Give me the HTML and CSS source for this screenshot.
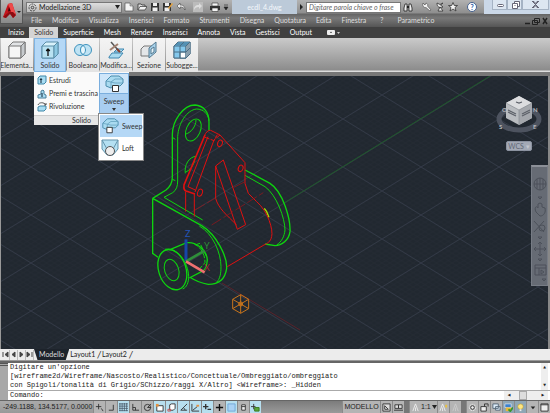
FILE: index.html
```html
<!DOCTYPE html>
<html lang="it">
<head>
    <meta charset="UTF-8">
    <title>Modellazione 3D</title>
    <meta name="viewport" content="width=device-width, initial-scale=1.0">
    <link rel="stylesheet" href="styles.css">
</head>
<body>
    <header class="header">
        <button class="app-button" aria-label="Menu applicazione">
            <svg width="22" height="23" viewBox="0 0 22 23">
                <path d="M2 17 L7 4 L11 3 L15 15 L12 18 L10 13 L6 14 L5 18 Z" fill="#c4141c"/>
                <path d="M7 4 L11 3 L15 15 L12 16 Z" fill="#ee4b4b"/>
                <path d="M2 17 L8 12 L12 12 L15 15 L12 18 L9 14 L5 18 Z" fill="#8e0c12"/>
                <path d="M8 7 L9.500 11 L7 11.500 Z" fill="#3c0507"/>
                <path d="M16 11 h4 l-2 2z" fill="#222"/>
            </svg>
        </button>
        <div class="titlebar">
            <div class="workspace">
                <svg width="9" height="9" viewBox="0 0 9 9" fill="none" stroke="#444"><circle cx="4.500" cy="4.500" r="3.500" stroke-dasharray="2 1"/><circle cx="4.500" cy="4.500" r="1.300"/></svg>
                <select class="workspace-select" aria-label="Area di lavoro"><option>Modellazione 3D</option></select>
                <svg width="5" height="4" viewBox="0 0 5 4"><path d="M0 0h5L2.500 4z" fill="#222"/></svg>
            </div>
            <div class="quick">
                <button aria-label="Nuovo"><svg viewBox="0 0 10 10"><path d="M1 1h5l3 3v5H1z" fill="#f4f4f4" stroke="#555" stroke-width=".7"/><path d="M6 1v3h3" fill="#bbb" stroke="#555" stroke-width=".5"/></svg></button>
                <button aria-label="Apri"><svg viewBox="0 0 10 10"><path d="M1 8V2h3l1 1h3v2" fill="#ddd" stroke="#333" stroke-width=".8"/><path d="M1 8l2-3.500h7L8 8z" fill="#f2f2f2" stroke="#333" stroke-width=".7"/></svg></button>
                <button aria-label="Salva"><svg viewBox="0 0 10 10"><path d="M1 1h8v8H1z" fill="#333"/><path d="M3 1h4v3H3zM2.500 5.500h5V9h-5z" fill="#eee"/></svg></button>
                <button aria-label="Salva con nome"><svg viewBox="0 0 10 10"><path d="M0 1h8v8H0z" fill="#333"/><path d="M2 1h4v3H2zM1.500 5.500h5V9h-5z" fill="#eee"/><path d="M5 6l4-5 1 1-4 5z" fill="#e8a33a"/></svg></button>
                <button aria-label="Annulla"><svg viewBox="0 0 10 10"><path d="M1 4l3-3v2c4 0 5 2 5 5-1-2-2-3-5-3v2z" fill="#eee" stroke="#444" stroke-width=".6"/></svg></button>
                <button class="off" aria-label="Ripeti"><svg viewBox="0 0 10 10"><path d="M9 4L6 1v2C2 3 1 5 1 8c1-2 2-3 5-3v2z" fill="#ddd"/></svg></button>
                <button aria-label="Stampa"><svg viewBox="0 0 10 10"><path d="M0 4h10v4H0z" fill="#333"/><path d="M2 1h6v3H2zM2 6h6v3.500H2z" fill="#f4f4f4" stroke="#333" stroke-width=".6"/></svg></button>
                <button class="more" aria-label="Personalizza"><svg viewBox="0 0 6 10"><path d="M1 3h4M1 5h4L3 8z" fill="#222" stroke="#222" stroke-width=".6"/></svg></button>
            </div>
            <div class="doc-title">ecdl_4.dwg</div>
            <svg class="expand" width="5" height="6" viewBox="0 0 5 6"><path d="M1 0l3 3-3 3z" fill="#222"/></svg>
            <input class="search" type="text" aria-label="Cerca" placeholder="Digitare parola chiave o frase">
            <div class="help-tools">
                <button aria-label="Cerca"><svg viewBox="0 0 10 10"><path d="M1 9V6l1-4h2v7zM6 9V2h2l1 4v3z" fill="#eee" stroke="#222" stroke-width=".8"/><path d="M4 4h2v2H4z" fill="#222"/></svg></button>
                <button aria-label="Assistenza"><svg viewBox="0 0 10 10"><path d="M1 1l2 2 1-2c2 1 2 2 1.500 3L9 8 8 9 4 5.500C2 6 0 4 1 1z" fill="#f4f4f4" stroke="#444" stroke-width=".6"/></svg></button>
                <button aria-label="Comunicazioni"><svg viewBox="0 0 10 10"><path d="M2 1c0 4 2 5 6 4L5.500 3 8 1 5 2.500zM3 9l2-4 3 4z" fill="#eee" stroke="#333" stroke-width=".8"/></svg></button>
                <button aria-label="Preferiti"><svg viewBox="0 0 10 10"><path d="M5 .500l1.300 3h3.200L7 5.500 8 9 5 7 2 9l1-3.500L.500 3.500h3.200z" fill="#f4f4f4" stroke="#333" stroke-width=".8"/></svg></button>
                <button class="help" aria-label="Guida">?</button>
            </div>
            <div class="window-tools">
                <button aria-label="Riduci"><svg viewBox="0 0 9 9"><rect x="1.500" y="4.500" width="6" height="2" rx="1" fill="#fff" stroke="#667"/></svg></button>
                <button aria-label="Ripristina"><svg viewBox="0 0 9 9" fill="#fff" stroke="#667"><path d="M3.500 1.500h5v5h-5z"/><path d="M1.500 3.500h5v5h-5z"/><path d="M3.500 5.500h1"/></svg></button>
                <button class="wide" aria-label="Chiudi"><svg viewBox="0 0 9 9" stroke="#667" fill="none"><path d="M1 1.500h2l1.500 2 1.500-2h2M1 7.500h2l1.500-2 1.500 2h2M2 2l5 5M7 2L2 7"/></svg></button>
            </div>
        </div>
        <nav class="menubar">
            <a href="#">File</a><a href="#">Modifica</a><a href="#">Visualizza</a><a href="#">Inserisci</a><a href="#">Formato</a><a href="#">Strumenti</a><a href="#">Disegna</a><a href="#">Quotatura</a><a href="#">Edita</a><a href="#">Finestra</a><a class="ask" href="#">?</a><a href="#">Parametrico</a>
            <svg class="doc-tools" width="24" height="8" viewBox="0 0 24 8" fill="none" stroke="#222"><path d="M1 6.500h5" stroke-width="1.500"/><path d="M10.500 1.500h5v4h-5zM8.500 3.500h5v4h-5z"/><path d="M19 1l4 6M23 1l-4 6" stroke-width="1.500"/></svg>
        </nav>
    </header>

    <nav class="tabs">
        <a href="#">Inizio</a><a class="active" href="#">Solido</a><a href="#">Superficie</a><a href="#">Mesh</a><a href="#">Render</a><a href="#">Inserisci</a><a href="#">Annota</a><a href="#">Vista</a><a href="#">Gestisci</a><a href="#">Output</a>
        <svg class="tab-icon" width="13" height="6" viewBox="0 0 13 6"><rect width="8" height="5" rx="1" fill="#eee"/><path d="M3 3h2L4 1.500z" fill="#333"/><path d="M10 2h3l-1.500 2z" fill="#ccc"/></svg>
    </nav>

    <div class="ribbon">
        <div class="tool">
            <button>
                <svg width="20" height="20" viewBox="0 0 20 20" stroke="#777" stroke-linejoin="round"><path d="M2 6l4-4h12v12l-4 4H2z" fill="#e2e4e6"/><path d="M2 6h12v12H2z" fill="#f6f6f6"/><path d="M14 6l4-4v12l-4 4z" fill="#c6cacd"/></svg>
                <span>Elementa...</span>
            </button>
        </div>
        <div class="tool">
            <button class="active">
                <svg width="20" height="20" viewBox="0 0 20 20" stroke="#5a8ea8" stroke-linejoin="round"><path d="M2 6l4-4h12v12l-4 4H2z" fill="#d8f1fa"/><path d="M2 6h12v12H2z" fill="#b9e2f2"/><path d="M14 6l4-4v12l-4 4z" fill="#8cc8e2"/><path d="M8 16V10M6.500 10.500L8 9l1.500 1.500z" stroke="#111" stroke-width="1.300"/></svg>
                <span>Solido</span>
            </button>
            <section class="panel">
                <div class="panel-body">
                    <div class="panel-list">
                        <button><svg width="10" height="10" viewBox="0 0 10 10"><path d="M1 3l2-2h6v6L7 9H1z" fill="#a8dcf2" stroke="#3f87a8"/><path d="M4 8V4M3 5l1-1.500L5 5" stroke="#123" fill="none"/></svg>Estrudi</button>
                        <button><svg width="10" height="10" viewBox="0 0 10 10"><path d="M1 9V6l3-1V2l2-1 1 1v3l2 1v3z" fill="#a8dcf2" stroke="#4b7f99"/><path d="M5 8V4" stroke="#123"/></svg>Premi e trascina</button>
                        <button><svg width="10" height="10" viewBox="0 0 10 10"><path d="M1 5l2-1h6v3L7 9H1z" fill="#a8dcf2" stroke="#3f87a8"/><path d="M1 3c1-3 6-3 8 0M9 1v2H7" stroke="#555" fill="none"/></svg>Rivoluzione</button>
                    </div>
                    <div class="split">
                        <button aria-label="Sweep">
                            <svg width="20" height="18" viewBox="0 0 20 18"><path d="M2 6l5-5h8l4 3v4l-3 3h-6l-3 2-5-2z" fill="#a9daf0" stroke="#4a8cac"/><path d="M2 6l5 1 4-3h8M7 13V7M7 7l4 1h8" fill="none" stroke="#5f9dbb" stroke-width=".8"/><path d="M8.500 10.500h6v6h-6z" fill="#fff" stroke="#333"/></svg>
                        </button>
                        <button class="split-label">Sweep<svg width="4" height="3" viewBox="0 0 4 3"><path d="M0 0h4L2 3z" fill="#333"/></svg></button>
                        <div class="flyout">
                            <button class="active"><svg width="18" height="18" viewBox="0 0 20 18"><path d="M2 6l5-5h8l4 3v4l-3 3h-6l-3 2-5-2z" fill="#a9daf0" stroke="#4a8cac"/><path d="M2 6l5 1 4-3h8M7 13V7M7 7l4 1h8" fill="none" stroke="#5f9dbb" stroke-width=".8"/><path d="M6.500 10.500h6v6h-6z" fill="#fff" stroke="#333"/></svg>Sweep</button>
                            <button><svg width="18" height="18" viewBox="0 0 18 18"><path d="M1 1h16v9l-5 6H6l-5-6z" fill="#b4e0f2" stroke="#6495ad"/><path d="M1 1l5 9M17 1l-5 9" stroke="#6495ad"/><circle cx="9" cy="12" r="4.500" fill="#eee" stroke="#555"/></svg>Loft</button>
                        </div>
                    </div>
                </div>
                <h2 class="panel-title">Solido</h2>
            </section>
        </div>
        <div class="tool">
            <button>
                <svg width="20" height="20" viewBox="0 0 20 20" stroke="#3f93bd"><circle cx="7" cy="10" r="5.500" fill="#bfe3f4"/><circle cx="13" cy="10" r="5.500" fill="#bfe3f4"/><path d="M10 5.400a5.500 5.500 0 0 1 0 9.200a5.500 5.500 0 0 1 0-9.200z" fill="#e8f6fc"/></svg>
                <span>Booleano</span>
            </button>
        </div>
        <div class="tool">
            <button>
                <svg width="20" height="20" viewBox="0 0 20 20"><path d="M8 12l3-3h7l-3 3zM3 17l3-4h11l-4 5H3z" fill="#a9daf0" stroke="#3f87b0"/><path d="M5 2l7 8" stroke="#555" stroke-width="1.500"/><path d="M4 10l8-6" stroke="#a08070" stroke-width="2"/><path d="M11 9l3 3" stroke="#8d3f2d" stroke-width="2"/></svg>
                <span>Modifica...</span>
            </button>
        </div>
        <div class="tool">
            <button>
                <svg width="20" height="20" viewBox="0 0 20 20" stroke="#777"><path d="M2 9l3-3h8v7l-3 3H2z" fill="#e4e6e8"/><path d="M10 8l7-6v10l-7 6z" fill="#a9d3ec" stroke="#52788f"/><path d="M12 9l3-2v5l-3 2z" fill="#e6f4fb" stroke="#52788f"/></svg>
                <span>Sezione</span>
            </button>
        </div>
        <div class="tool">
            <button>
                <svg width="20" height="20" viewBox="0 0 20 20" stroke="#4b6f86" stroke-linejoin="round"><path d="M2 6l4-4h12v12l-4 4H2z" fill="#5fb2e0"/><path d="M2 6h12v12H2z" fill="#84c8ec"/><path d="M8 12h6v6H8z" fill="#fff"/><path d="M14 6l4-4v12l-4 4z" fill="#c9d0d5"/><path d="M8 6v12M2 12h12l4-4M8 6l4-4M4 4h12v12" fill="none"/></svg>
                <span>Subogge...</span>
            </button>
        </div>
    </div>

    <main class="viewport">
        <svg class="drawing" width="100%" height="100%">
            <defs>
                <pattern id="minor" width="7.800" height="4.800" x="381" y="19" patternUnits="userSpaceOnUse">
                    <path d="M0 0L7.800 4.800M7.800 0L0 4.800" stroke="#262d37" stroke-width=".5"/>
                </pattern>
                <pattern id="major" width="78" height="48" x="381" y="19" patternUnits="userSpaceOnUse">
                    <path d="M0 0L78 48M78 0L0 48" stroke="#323946" stroke-width="1"/>
                </pattern>
            </defs>
            <rect width="100%" height="100%" fill="#212830"/>
            <rect width="100%" height="100%" fill="url(#minor)"/>
            <rect width="100%" height="100%" fill="url(#major)"/>
            <path d="M283 127L489 0" stroke="#1f5a2b"/>
            <path d="M221 207L299 254" stroke="#5a232b"/>

            <g transform="translate(139 14) scale(.3333)" fill="none" stroke-width="3">
                <g stroke="#0ed40e">
                    <!-- staffa posteriore -->
                    <path d="M38 325L78 300Q97 285 97 262V135C97 92 130 45 165 45C190 47 207 65 207 95V122" stroke-width="4"/>
                    <path d="M72 322L98 308Q114 298 113 270V140C115 100 140 60 170 57C190 57 205 72 207 92"/>
                    <ellipse cx="160" cy="120" rx="21" ry="35" transform="rotate(24 160 120)"/>
                    <path d="M138 132C152 128 168 110 168 90M136 250C132 225 148 200 168 199M138 246C150 240 160 228 164 212"/>
                    <path d="M97 142L106 148M97 268L106 272"/>
                    <!-- staffa anteriore -->
                    <path d="M38 325V490L54 502M38 325L185 407C230 435 262 500 260 535C255 570 235 583 205 583C185 580 165 572 150 562" stroke-width="4"/>
                    <path d="M72 322L188 390M178 408C220 432 243 490 243 530C243 552 240 566 230 577"/>
                    <!-- mozzo -->
                    <ellipse cx="97" cy="539" rx="41" ry="62" transform="rotate(-18 97 539)" stroke-width="4"/>
                    <path d="M75 478C110 470 145 515 146 560C146 578 140 592 128 597"/>
                    <ellipse cx="95" cy="540" rx="21" ry="33" transform="rotate(-18 95 540)"/>
                    <path d="M88 480L140 458C170 455 200 480 202 510C200 530 196 538 190 542L148 564" stroke-width="4"/>
                    <path d="M160 460C180 470 195 490 195 518L180 535M165 465L180 460L200 500" stroke-dasharray="16 5"/>
                    <!-- staffa destra -->
                    <path d="M315 240L390 280C430 305 452 390 450 425C447 450 425 467 405 467L375 462" stroke-width="4"/>
                    <path d="M315 256L375 290C410 315 435 385 435 420C433 440 425 455 410 465"/>
                    <path d="M373 355L380 365L387 382" stroke="#a5e000" stroke-width="4"/>
                </g>
                <g stroke="#e01010">
                    <path d="M192 140Q200 120 212 121L240 135L315 218V280L325 310L350 335C385 365 400 420 395 440C392 455 380 462 372 465L262 530"/>
                    <path d="M195 135L132 285Q130 300 138 303L165 312" stroke-width="5"/>
                    <path d="M222 150L165 306M204 140L144 290L166 300M137 305V365M163 312V380"/>
                    <path d="M195 142L222 152L232 134M240 135L222 150" stroke-dasharray="14 4"/>
                    <ellipse cx="240" cy="160" rx="7" ry="10" transform="rotate(20 240 160)"/>
                    <ellipse cx="302" cy="235" rx="7" ry="10" transform="rotate(20 302 235)"/>
                    <ellipse cx="180" cy="308" rx="7" ry="11" transform="rotate(20 180 308)"/>
                    <path d="M227 228L250 210L317 404L292 418L227 228V325C235 355 260 375 290 405"/>
                    <path d="M282 292L315 275M165 360L225 325M215 405L370 308" stroke="#a01418" stroke-width="2" stroke-dasharray="34 8"/>
                </g>
                <!-- icona UCS -->
                <path d="M138 514V448" stroke="#1746a8" stroke-width="9"/>
                <path d="M138 514L194 482" stroke="#2f8f3a" stroke-width="8"/>
                <path d="M138 514L194 547" stroke="#f07070" stroke-width="8"/>
                <!-- luce -->
                <g stroke="#c8741c">
                    <path d="M302 614L326 628V656L302 670L278 656V628ZM302 614V670M278 628L326 656M326 628L278 656"/>
                    <circle cx="302" cy="642" r="6"/>
                </g>
            </g>
            <text class="axis" x="184" y="161" fill="#2455b8">Z</text>
            <text class="axis" x="203" y="173" fill="#2f8f3a">Y</text>
            <text class="axis" x="203" y="195" fill="#a52a32">X</text>
        </svg>
        <div class="navigator">
            <svg width="50" height="44" viewBox="0 0 50 44">
                <ellipse cx="25" cy="27" rx="20" ry="11" fill="none" stroke="#4d535f" stroke-width="5"/>
                <path d="M25 4L38 11V26L25 33L12 26V11Z" fill="#b9bcc0"/>
                <path d="M25 4L38 11L25 18L12 11Z" fill="#dcdddf"/>
                <path d="M25 18L38 11V26L25 33Z" fill="#a4a7ac"/>
                <path d="M12 11L25 18L38 11M25 18V33" fill="none" stroke="#888c92" stroke-width=".7"/>
                <path d="M22 10l3 1 3-1M14 18l8 4M14 20l8 4M28 22l8-4M28 24l8-4" stroke="#5c6068" stroke-width="1.200" fill="none"/>
                <g class="compass"><text x="8" y="20">O</text><text x="39" y="20">N</text><text x="5" y="37">S</text><text x="39" y="37">E</text></g>
            </svg>
            <button class="wcs">WCS <span>▾</span></button>
        </div>
        <div class="navbar">
            <svg width="15" height="112" viewBox="0 0 15 112" fill="none" stroke="#4c515a">
                <circle cx="8" cy="14" r="6"/><path d="M2 14h12M8 8v12M5 9v10M11 9v10"/><path d="M6 27h4l-2 2z"/>
                <path d="M4 42c-2-4 0-7 2-4v-4l2-1 2 1v3l3 1c1 4-1 8-5 8z"/>
                <path d="M2 51l10 11M12 51L2 62"/><circle cx="10" cy="58" r="3"/><path d="M6 67h4l-2 2z"/>
                <path d="M8 72v14M2 79h12M6 74l2-2 2 2M6 84l2 2 2-2M4 77l-2 2 2 2M12 77l2 2-2 2"/><path d="M6 89h4l-2 2z"/>
                <path d="M3 95h11v10H3zM3 98h11M7 98v7M9 100l3 2-3 2z"/><path d="M10 109h4l-2 2z"/>
            </svg>
        </div>
    </main>

    <nav class="layouts">
        <button aria-label="Primo"><svg viewBox="0 0 7 7"><path d="M1 1v5M6 1v5L3 3.500z"/></svg></button>
        <button aria-label="Precedente"><svg viewBox="0 0 7 7"><path d="M5 1v5L2 3.500z"/></svg></button>
        <button aria-label="Successivo"><svg viewBox="0 0 7 7"><path d="M2 1v5l3-2.500z"/></svg></button>
        <button aria-label="Ultimo"><svg viewBox="0 0 7 7"><path d="M6 1v5M1 1v5l3-2.500z"/></svg></button>
        <a class="active" href="#">Modello</a><a href="#">Layout1</a><i>/</i><a href="#">Layout2</a><i>/</i>
    </nav>

    <section class="command">
        <div class="grip"></div>
        <div class="command-main">
            <div class="history">
                <pre>Digitare un'opzione
[wireframe2d/Wireframe/Nascosto/Realistico/Concettuale/Ombreggiato/ombreggiato
con Spigoli/tonalità di Grigio/SChizzo/raggi X/Altro] &lt;Wireframe&gt;: _Hidden</pre>
                <div class="scroll-y"><span>▴</span><span>▾</span></div>
            </div>
            <div class="prompt">
                <label for="comando">Comando:</label>
                <input id="comando" type="text">
                <div class="scroll-x"><span>◂</span><b></b><span>▸</span></div>
            </div>
        </div>
    </section>

    <footer class="status">
        <output class="coords">-249.1188, 134.5177, 0.0000</output>
        <div class="toggles">
            <button aria-label="Vincoli"><svg viewBox="0 0 10 10"><path d="M4 1v6M1 4h6M7 6l2 3"/></svg></button>
            <button aria-label="Snap"><svg viewBox="0 0 10 10"><path d="M7 2v6H2"/></svg></button>
            <button class="on" aria-label="Griglia"><svg viewBox="0 0 10 10"><path d="M0 1h10M0 3.500h10M0 6h10M0 8.500h10M1 0v9M3.500 0v9M6 0v9M8.500 0v9" stroke="#456" stroke-width=".8"/></svg></button>
            <button aria-label="Orto"><svg viewBox="0 0 10 10"><path d="M2 1v7h7M2 5h3v3"/></svg></button>
            <button aria-label="Polare"><svg viewBox="0 0 10 10"><circle cx="5" cy="5" r="3.500"/><path d="M5 5l4-4M5 5h4"/></svg></button>
            <button class="on" aria-label="Osnap"><svg viewBox="0 0 10 10"><path d="M2 3h7v6H2z" fill="#fff"/><path d="M1 1h3v3H1z" fill="#e59140" stroke="none"/></svg></button>
            <button class="on" aria-label="Osnap 3D"><svg viewBox="0 0 10 10"><path d="M3 2l2-1h4v5L7 8H3z" fill="#fff"/><path d="M1 7h3v2H1z" stroke="#c55"/></svg></button>
            <button class="on" aria-label="Puntamento"><svg viewBox="0 0 10 10"><path d="M9 1L2 8h7M5 5l2 3"/></svg></button>
            <button class="on" aria-label="UCS dinamico"><svg viewBox="0 0 10 10"><path d="M1 1v8h8M2 8l5-4"/><path d="M6 2h3v2H6z" fill="#e59140" stroke="none"/></svg></button>
            <button class="on" aria-label="Input dinamico"><svg viewBox="0 0 10 10"><path d="M3 1v6M0 4h6M5 7h4" stroke-width="1.500"/></svg></button>
            <button aria-label="Spessore"><svg viewBox="0 0 10 10"><path d="M5 1v8M1 5h8" stroke="#111" stroke-width="1.500"/></svg></button>
            <button class="on" aria-label="Trasparenza"><svg viewBox="0 0 10 10"><path d="M1 1h8v8H1z" fill="#a9d1f4" stroke="#6fa6d6"/></svg></button>
            <button aria-label="Proprietà"><svg viewBox="0 0 10 10"><path d="M3 2h4v6H3zM3 4h4" fill="#eee"/></svg></button>
            <button class="on" aria-label="Selezione ciclica"><svg viewBox="0 0 10 10"><path d="M3 1v6M0 4h5"/><path d="M4 5h5v4H4z" fill="#5aa63c" stroke="#38761d"/></svg></button>
        </div>
        <div class="view-tools">
            <button class="model">MODELLO</button>
            <button aria-label="Layout"><svg viewBox="0 0 10 10"><path d="M1 1h8v8H1z" fill="#ddd"/><path d="M3 3l4 4H3z"/></svg></button>
            <button aria-label="Viste"><svg viewBox="0 0 10 10"><path d="M1 2h4v4H1zM5 2h4v4H5zM0 8h10" fill="#ddd"/></svg></button>
            <span class="gap"></span>
            <button class="scale"><svg viewBox="0 0 10 10"><path d="M5 1L2 9M5 1l3 8M5 5v4" stroke="#eee"/></svg>1:1<svg class="arrow" viewBox="0 0 5 4"><path d="M0 0h5L2.500 4z" fill="#222" stroke="none"/></svg></button>
            <button aria-label="Visibilità"><svg viewBox="0 0 10 10"><path d="M4 1L1 9M4 1l3 8M4 5v4" stroke="#eee"/><path d="M7 2h2v3H7z" fill="#ecc23c" stroke="none"/></svg></button>
            <button aria-label="Automatico"><svg viewBox="0 0 10 10"><path d="M5 1L2 9M5 1l3 8M5 5v4" stroke="#ccc"/></svg></button>
            <span class="gap"></span>
            <button aria-label="Spazio"><svg viewBox="0 0 10 10"><circle cx="5" cy="5" r="3.500" stroke="#eee" stroke-dasharray="2 1"/><circle cx="5" cy="5" r="2" fill="#eee"/></svg></button>
            <button aria-label="Blocca"><svg viewBox="0 0 10 10"><path d="M1 4h6v5H1z" fill="#eee"/><path d="M5 4V1h4v3"/></svg></button>
            <button aria-label="Hardware"><svg viewBox="0 0 10 10"><path d="M1 1h6v5H1zM4 4h5v4H4z" fill="#dcebf7" stroke="#567"/></svg></button>
            <button class="tray" aria-label="Libreria"><svg viewBox="0 0 10 10"><path d="M1 1h7v4H1z" fill="#3c82cf" stroke="#fff" stroke-width=".6"/><path d="M2 5h6v4H2z" fill="#e8b83a" stroke="none"/><path d="M5 7l2 2 3-4" stroke="#39952b" stroke-width="2"/></svg></button>
            <button class="tray" aria-label="Isola"><svg viewBox="0 0 10 10"><circle cx="5" cy="4" r="3" fill="#ffe680" stroke="#b99b2a" stroke-width=".6"/><path d="M4 7h2v2H4z" fill="#eee" stroke="none"/></svg></button>
            <button aria-label="Menu barra"><svg viewBox="0 0 10 10"><path d="M3 4h5L5.500 7z" fill="#222" stroke="none"/></svg></button>
            <button aria-label="Schermo intero"><svg viewBox="0 0 10 10"><path d="M1 1h8v8H1zM1 2h8" fill="#eee"/></svg></button>
        </div>
    </footer>
</body>
</html>
```
FILE: styles.css
```css
* {
    box-sizing: border-box;
}
body {
    margin: 0;
    min-height: 100vh;
    display: flex;
    flex-direction: column;
    overflow: hidden;
    background: #777;
    font-family: Lato, "Liberation Sans", sans-serif;
    font-size: 7px;
    line-height: 9px;
    color: #333;
}
button, input, select {
    margin: 0;
    padding: 0;
    border: 0;
    background: none;
    font: inherit;
    color: inherit;
}
a {
    color: inherit;
    text-decoration: none;
}
svg {
    display: block;
    flex: none;
}

/* titolo e menu */
.header {
    display: grid;
    grid-template-columns: 23px 1fr;
    grid-template-rows: 14px 13px;
    background: linear-gradient(#b2b2b2, #8e8e8e 13px, #646464 14px, #787878 18px, #555);
}
.app-button {
    grid-row: 1 / 3;
    height: 24px;
    border: 1px solid #555;
    border-top: 0;
    background: linear-gradient(#b9b9b9, #8a8a8a);
    overflow: hidden;
}
.titlebar {
    display: flex;
    align-items: center;
    min-width: 0;
}
.workspace {
    display: flex;
    align-items: center;
    gap: 2px;
    flex: none;
    width: 96px;
    height: 11px;
    margin-left: 3px;
    padding: 0 1px;
    border: 1px solid #777;
    background: linear-gradient(#dedede, #bcbcbc);
}
.workspace-select {
    flex: 1;
    appearance: none;
    height: 9px;
    color: #222;
}
.quick {
    display: flex;
    align-items: center;
    gap: 3px;
    width: 110px;
    padding-left: 2px;
}
.quick svg, .help-tools svg {
    width: 10px;
    height: 10px;
}
.quick .off {
    margin: 0 4px;
    background: #bbb;
}
.quick .more svg {
    width: 6px;
}
.doc-title {
    flex: none;
    width: 65px;
    height: 14px;
    line-height: 14px;
    text-align: center;
    color: #f4f8fc;
    background: #bccad9;
}
.expand {
    margin: 0 2px;
}
.search {
    flex: 1;
    min-width: 0;
    height: 11px;
    padding: 0 2px;
    border: 1px solid #777;
    background: #fff;
}
.search::placeholder {
    color: #666;
    font-style: italic;
}
.help-tools {
    display: flex;
    gap: 3px;
    padding: 0 7px 0 2px;
}
.help-tools button:first-child {
    margin-right: 6px;
}
.help-tools .help {
    width: 10px;
    height: 10px;
    margin-left: 6px;
    border: 1px solid #46628f;
    border-radius: 5px;
    background: #fff;
    color: #2453a0;
    font-weight: bold;
    line-height: 8px;
}
.window-tools {
    display: flex;
    align-items: flex-start;
    height: 14px;
    padding: 0 1px 0 8px;
    background: #cbd8e8;
}
.window-tools button {
    width: 15px;
    height: 10px;
    padding-left: 3px;
    border: 1px solid #a5b3c4;
    border-top: 0;
    background: #dce6f1;
}
.window-tools .wide {
    width: 27px;
    padding-left: 8px;
}
.window-tools svg {
    width: 9px;
    height: 9px;
}
.menubar {
    display: flex;
    align-items: center;
    gap: 10px;
    padding: 0 2px 0 8px;
    color: #dedede;
}
.menubar .ask {
    padding: 0 4px;
}
.doc-tools {
    margin-left: auto;
}

/* schede */
.tabs {
    display: flex;
    align-items: stretch;
    height: 11px;
    padding-left: 3px;
    background: #404040;
    color: #fff;
    line-height: 11px;
}
.tabs a {
    padding: 0 5px;
}
.tabs .active {
    background: #d4d4d4;
    color: #333;
}
.tab-icon {
    align-self: center;
    margin-left: 10px;
}

/* barra multifunzione */
.ribbon {
    display: flex;
    gap: 1px;
    padding: 0 1px;
    border-bottom: 4px solid #777;
    background: linear-gradient(#cacaca, #8c8c8c 32px, #ddd 33px);
}
.tool {
    position: relative;
    width: 32px;
}
.tool > button {
    display: flex;
    flex-direction: column;
    align-items: center;
    width: 100%;
    height: 34px;
    padding-top: 2px;
    background: linear-gradient(#f4f4f4, #e4e4e4);
    white-space: nowrap;
    overflow: hidden;
}
.tool > button span {
    margin-top: 1px;
}
.tool > .active {
    border: 1px solid #7fb4e3;
    padding-top: 1px;
    background: #b5d8f6;
}
.panel {
    position: absolute;
    z-index: 2;
    top: 34px;
    left: 0;
    width: 95px;
    background: #fafafa;
}
.panel-body {
    display: flex;
    height: 43px;
}
.panel-list {
    flex: 1;
    display: flex;
    flex-direction: column;
    justify-content: space-evenly;
    padding-left: 3px;
}
.panel-list button {
    display: flex;
    align-items: center;
    gap: 2px;
    white-space: nowrap;
}
.split {
    position: relative;
    flex: none;
    width: 32px;
    padding: 1px;
}
.split button {
    display: flex;
    align-items: center;
    justify-content: center;
    width: 100%;
    height: 21px;
    border: 1px solid #7aaede;
    background: #cfe6fa;
}
.split .split-label {
    flex-direction: column;
    gap: 2px;
    height: 20px;
    border-top: 0;
    background: #a8cdf0;
}
.panel-title {
    margin: 0;
    height: 10px;
    border-top: 1px solid #ccc;
    background: #e6e6e6;
    font-size: 7px;
    font-weight: normal;
    line-height: 9px;
    text-align: center;
}
.flyout {
    position: absolute;
    top: 41px;
    left: 0;
    width: 46px;
    padding: 1px;
    border: 1px solid #888;
    background: #fff;
}
.flyout button {
    justify-content: flex-start;
    gap: 3px;
    height: 22px;
    padding-left: 1px;
    border: 0;
    background: #fff;
}
.flyout .active {
    background: #b5d8f6;
}

/* area di disegno */
.viewport {
    position: relative;
    flex: 1;
    min-height: 120px;
    border-left: 1px solid #999;
    border-right: 2px solid #888;
}
.drawing {
    position: absolute;
    inset: 0;
}
.axis {
    font-size: 9px;
}
.navigator {
    position: absolute;
    top: 16px;
    right: 4px;
    display: flex;
    flex-direction: column;
    align-items: center;
    gap: 5px;
}
.compass {
    fill: #b5b8bd;
    font-size: 6px;
    font-weight: bold;
}
.wcs {
    width: 26px;
    height: 10px;
    border: 1px solid #8b92a0;
    border-radius: 2px;
    background: #a3a9b5;
    color: #626875;
    line-height: 8px;
}
.wcs span {
    color: #c2c6ce;
}
.navbar {
    position: absolute;
    top: 89px;
    right: 0;
    width: 17px;
    height: 121px;
    padding-top: 3px;
    border: 1px solid #777c85;
    border-top: 2px solid #8c9098;
    background: #666b74;
}

/* schede layout */
.layouts {
    display: flex;
    align-items: center;
    height: 12px;
    padding-left: 2px;
    border-bottom: 1px solid #999;
    background: #ececec;
    color: #222;
}
.layouts button {
    width: 8px;
    height: 10px;
    border-right: 1px solid #bbb;
}
.layouts button svg {
    width: 7px;
    height: 7px;
    fill: #444;
    stroke: #444;
    stroke-width: 1px;
}
.layouts a {
    padding: 0 2px 0 1px;
}
.layouts .active {
    align-self: stretch;
    padding: 0 5px;
    background: #1d232b;
    color: #ddd;
    line-height: 11px;
    clip-path: polygon(0 0, 100% 0, 90% 100%, 10% 100%);
}
.layouts i {
    font-size: 9px;
}

/* riga di comando */
.command {
    display: flex;
    border-top: 2px solid #666;
    background: #fff;
    font-family: "Liberation Mono", monospace;
    color: #222;
}
.grip {
    width: 8px;
    border-top: 3px double #555;
    background: #a8a8a8;
}
.command-main {
    flex: 1;
    min-width: 0;
}
.history, .prompt {
    display: flex;
    padding-right: 2px;
}
.history pre {
    flex: 1;
    margin: 0;
    padding-left: 2px;
    font: inherit;
}
.scroll-y {
    display: flex;
    flex-direction: column;
    justify-content: space-between;
    width: 7px;
    background: #eee;
    text-align: center;
}
.prompt {
    align-items: center;
    height: 10px;
    padding-left: 2px;
    border-top: 1px solid #aaa;
}
.prompt input {
    flex: 1;
    min-width: 0;
    height: 9px;
    outline: 0;
}
.scroll-x {
    display: flex;
    justify-content: space-between;
    width: 44px;
    height: 9px;
    padding: 0 3px;
    background: #eee;
    line-height: 8px;
}
.scroll-x b {
    width: 8px;
    margin-right: 6px;
    border: 1px solid #aaa;
    background: #ddd;
}

/* barra di stato */
.status {
    display: flex;
    align-items: stretch;
    height: 13px;
    border-top: 1px solid #666;
    background: linear-gradient(#7c7c7c, #9a9a9a);
    font-family: "Liberation Sans", sans-serif;
    color: #222;
    line-height: 12px;
    overflow: hidden;
}
.coords {
    flex: none;
    width: 93px;
    padding-left: 3px;
    background: linear-gradient(#aaa, #999);
    white-space: nowrap;
}
.toggles, .view-tools {
    display: flex;
}
.toggles button, .view-tools button {
    flex: none;
    width: 12px;
    padding: 0 1px;
    border-left: 1px solid #8a8a8a;
    background: #b4b4b4;
}
.toggles .on {
    background: #b7dfef;
}
.status svg {
    width: 9px;
    height: 9px;
    fill: none;
    stroke: #333;
}
.view-tools {
    margin-left: auto;
}
.view-tools .model {
    width: 38px;
}
.view-tools .scale {
    display: flex;
    align-items: center;
    gap: 1px;
    width: 28px;
}
.status .arrow {
    width: 5px;
    height: 4px;
}
.view-tools .tray {
    background: #8fa6b5;
}
.gap {
    width: 5px;
    background: #777;
}
```
